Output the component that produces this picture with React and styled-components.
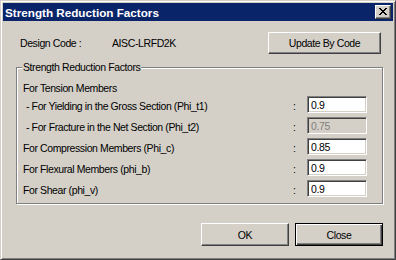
import React from 'react';
import styled, { createGlobalStyle } from 'styled-components';

const Global = createGlobalStyle`
  html, body { margin: 0; padding: 0; background: #d4d0c8; }
  body {
    font-family: "Liberation Sans", Arial, sans-serif;
    font-size: 10.5px;
    letter-spacing: -0.4px;
    color: #000;
  }
  * { box-sizing: border-box; }
`;

const Window = styled.div`
  width: 396px;
  height: 260px;
  background: #d4d0c8;
  border: 1px solid;
  border-color: #d4d0c8 #404040 #404040 #d4d0c8;
  box-shadow: inset 1px 1px 0 #fff, inset -1px -1px 0 #808080;
  padding: 2px;
  display: flex;
  flex-direction: column;
`;

const TitleBar = styled.div`
  height: 18px;
  background: #0a246a;
  color: #fff;
  display: flex;
  align-items: center;
  justify-content: space-between;
  padding: 0 2px 0 2px;
`;

const Title = styled.span`
  font-weight: bold;
  font-size: 11.7px;
  letter-spacing: 0;
  line-height: 13px;
`;

const CloseBox = styled.div`
  width: 16px;
  height: 14px;
  background: #d4d0c8;
  border: 1px solid;
  border-color: #fff #404040 #404040 #fff;
  box-shadow: inset -1px -1px 0 #808080;
  display: flex;
  align-items: center;
  justify-content: center;
  padding-bottom: 1px;
`;

const Body = styled.div`
  flex: 1;
  display: flex;
  flex-direction: column;
  padding: 11px 10px 11px 13px;
`;

const TopRow = styled.div`
  display: flex;
  align-items: center;
  height: 22px;
  padding-left: 4px;
`;

const FieldLabel = styled.span`
  width: ${p => p.$w || 'auto'};
  line-height: 13px;
`;

const Button = styled.button`
  font: inherit;
  letter-spacing: inherit;
  color: #000;
  width: ${p => p.$w}px;
  height: ${p => p.$h || 23}px;
  margin: 0;
  margin-left: ${p => p.$ml || 0};
  margin-right: ${p => p.$mr || 0}px;
  padding: 0;
  background: #d4d0c8;
  border: 1px solid;
  border-color: ${p => p.$default ? '#000' : '#fff #404040 #404040 #fff'};
  box-shadow: ${p => p.$default
    ? 'inset 1px 1px 0 #fff, inset -1px -1px 0 #404040, inset -2px -2px 0 #808080'
    : 'inset -1px -1px 0 #808080'};
  cursor: default;
`;

const Group = styled.fieldset`
  margin: 7px 0 0 0;
  padding: 0 15px 6px 5px;
  border: 1px solid #808080;
  box-shadow: 1px 1px 0 #fff, inset 1px 1px 0 #fff;
  min-inline-size: 0;
`;

const Legend = styled.legend`
  padding: 0 1px;
  line-height: 13px;
  background: #d4d0c8;
`;

const Grid = styled.div`
  display: grid;
  grid-template-columns: 1fr 14px 60px;
  row-gap: 4px;
  margin-top: 8px;
`;

const RowLabel = styled.span`
  grid-column: ${p => p.$full ? '1 / 4' : '1'};
  padding-left: ${p => p.$indent ? 4 : 1}px;
  line-height: 13px;
  padding-top: ${p => p.$full ? 0 : 4}px;
  margin-bottom: ${p => p.$full ? -3 : 0}px;
  white-space: nowrap;
`;

const Colon = styled.span`
  line-height: 13px;
  padding-top: 4px;
`;

const Field = styled.input`
  font: inherit;
  letter-spacing: inherit;
  width: 60px;
  height: 17px;
  margin: 0;
  padding: 0 0 0 3px;
  border: 1px solid;
  border-color: #808080 #fff #fff #808080;
  box-shadow: inset 1px 1px 0 #404040, inset -1px -1px 0 #d4d0c8;
  background: ${p => p.disabled ? '#d4d0c8' : '#fff'};
  color: ${p => p.disabled ? '#808080' : '#000'};
  outline: none;
  &:disabled { -webkit-text-fill-color: #808080; opacity: 1; }
`;

const ButtonRow = styled.div`
  margin-top: auto;
  display: flex;
  justify-content: flex-end;
  gap: 6px;
`;

const CloseGlyph = () => (
  <svg width="8" height="7" viewBox="0 0 8 7" shapeRendering="crispEdges">
    <path
      fill="#000"
      d="M0 0h2v1h-2zM6 0h2v1h-2zM1 1h2v1h-2zM5 1h2v1h-2zM2 2h4v1h-4zM3 3h2v1h-2zM2 4h4v1h-4zM1 5h2v1h-2zM5 5h2v1h-2zM0 6h2v1h-2zM6 6h2v1h-2z"
    />
  </svg>
);

const rows = [
  { label: '- For Yielding in the Gross Section (Phi_t1)', value: '0.9', indent: true },
  { label: '- For Fracture in the Net Section (Phi_t2)', value: '0.75', indent: true, disabled: true },
  { label: 'For Compression Members (Phi_c)', value: '0.85' },
  { label: 'For Flexural Members (phi_b)', value: '0.9' },
  { label: 'For Shear (phi_v)', value: '0.9' },
];

export default function App() {
  return (
    <>
      <Global />
      <Window>
        <TitleBar>
          <Title>Strength Reduction Factors</Title>
          <CloseBox><CloseGlyph /></CloseBox>
        </TitleBar>
        <Body>
          <TopRow>
            <FieldLabel $w="92px">Design Code :</FieldLabel>
            <FieldLabel>AISC-LRFD2K</FieldLabel>
            <Button $w={113} $h={22} $ml="auto" $mr={2}>Update By Code</Button>
          </TopRow>
          <Group>
            <Legend>Strength Reduction Factors</Legend>
            <Grid>
              <RowLabel $full>For Tension Members</RowLabel>
              {rows.map(r => (
                <React.Fragment key={r.label}>
                  <RowLabel $indent={r.indent}>{r.label}</RowLabel>
                  <Colon>:</Colon>
                  <Field defaultValue={r.value} disabled={r.disabled} />
                </React.Fragment>
              ))}
            </Grid>
          </Group>
          <ButtonRow>
            <Button $w={88}>OK</Button>
            <Button $w={88} $default>Close</Button>
          </ButtonRow>
        </Body>
      </Window>
    </>
  );
}
